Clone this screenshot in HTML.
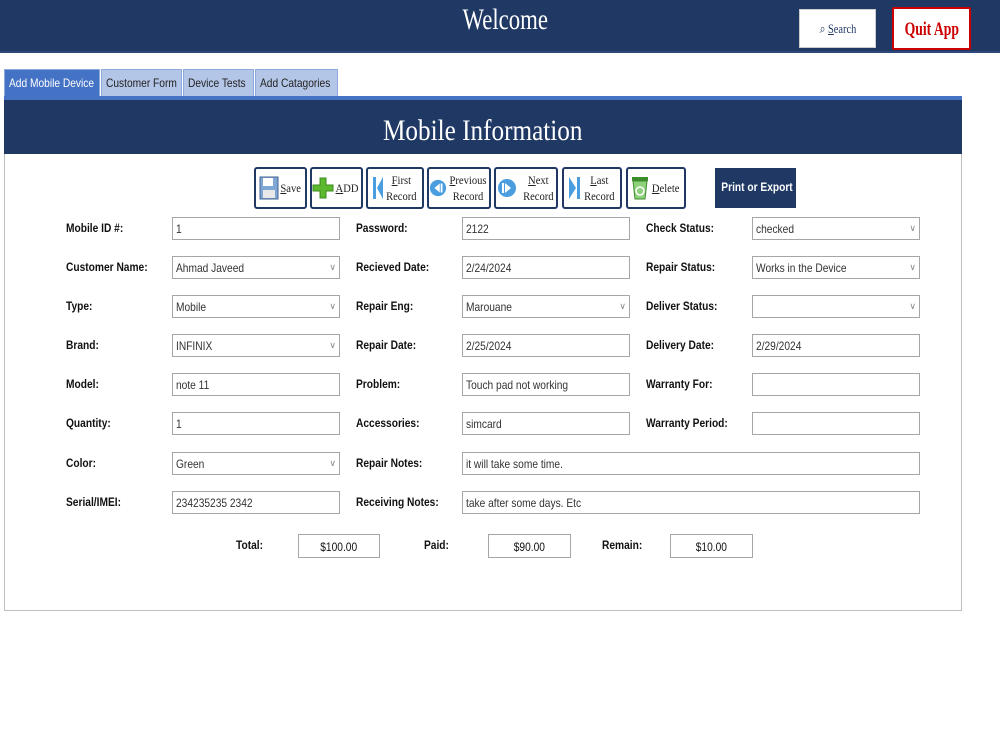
<!DOCTYPE html>
<html><head><meta charset="utf-8">
<style>
*{margin:0;padding:0;box-sizing:border-box}
body{width:1000px;height:750px;background:#fff;font-family:"Liberation Sans",sans-serif;position:relative;overflow:hidden}
.a{position:absolute}
.s{display:inline-block;transform:scaleX(.85);transform-origin:left center;white-space:nowrap}
.sc{display:inline-block;transform:scaleX(.8);white-space:nowrap}
.hdr{left:0;top:0;width:1000px;height:53px;background:#1f3864;border-bottom:2px solid #2e4a7a}
.lbl{font-size:12px;font-weight:bold;color:#111;white-space:nowrap;transform:scaleX(.85);transform-origin:left center}
.in{height:23px;border:1px solid #a6a6a6;background:#fff;font-size:12px;color:#333;padding:4px 3px;white-space:nowrap}
.arr{position:absolute;right:3px;top:5px;font-size:9px;color:#888}
.tab{top:69px;height:27px;font-size:12px;color:#222;background:#b4c6e7;border:1px solid #8ea9db;border-bottom:none;padding:6px 4px 0;white-space:nowrap;overflow:hidden}
.btn{top:167px;height:42px;border:2px solid #1f3864;border-radius:3px;background:#fff;font-family:"Liberation Serif",serif;font-size:12px;color:#222;display:flex;align-items:center;justify-content:center;text-align:center;line-height:16px;overflow:hidden}
.btn span{display:inline-block;transform:scaleX(.88)}
.tot{height:24px;border:1px solid #a6a6a6;font-size:12px;text-align:center;padding-top:5px;color:#111}
</style></head><body>
<div class="a hdr"></div>
<div class="a" style="left:0;top:3px;width:1010px;text-align:center;font-family:'Liberation Serif',serif;font-size:30px;color:#fff"><span class="sc" style="transform:scaleX(.76)">Welcome</span></div>
<div class="a" style="left:799px;top:9px;width:77px;height:39px;background:#fff;border:1px solid #ccc;font-family:'Liberation Serif',serif;font-size:13px;color:#1f3864;text-align:center;padding-top:11px"><span class="sc">&#x2315; <u>S</u>earch</span></div>
<div class="a" style="left:892px;top:7px;width:79px;height:43px;background:#fff;border:2px solid #c00;border-radius:2px;font-family:'Liberation Serif',serif;font-size:19px;font-weight:bold;color:#c00;text-align:center;padding-top:10px"><span class="sc" style="transform:scaleX(.72)">Quit App</span></div>

<div class="a tab" style="left:4px;width:96px;background:#4472c4;color:#fff"><span class="s">Add Mobile Device</span></div>
<div class="a tab" style="left:101px;width:81px"><span class="s">Customer Form</span></div>
<div class="a tab" style="left:183px;width:71px"><span class="s">Device Tests</span></div>
<div class="a tab" style="left:255px;width:83px"><span class="s">Add Catagories</span></div>

<div class="a" style="left:4px;top:96px;width:958px;height:515px;border:1px solid #bfbfbf;border-top:none"></div>
<div class="a" style="left:4px;top:96px;width:958px;height:4px;background:#4472c4"></div>
<div class="a" style="left:4px;top:100px;width:958px;height:54px;background:#1f3864;color:#fff;font-family:'Liberation Serif',serif;font-size:30px;text-align:center;padding-top:14px"><span class="sc" style="transform:scaleX(.84)">Mobile Information</span></div>

<div class="a btn" style="left:254px;width:53px"><svg width="20" height="26" viewBox="0 0 20 26"><rect x="1" y="2" width="18" height="22" fill="#7fa7d6" stroke="#46648c"/><rect x="4" y="3" width="10" height="8" fill="#fff"/><rect x="4" y="15" width="12" height="8" fill="#e8e8e8"/></svg><span><u>S</u>ave</span></div>
<div class="a btn" style="left:310px;width:53px"><svg width="22" height="24" viewBox="0 0 22 24"><path d="M8 2h6v7h7v6h-7v7H8v-7H1V9h7z" fill="#5cb82e" stroke="#3a8a1a"/></svg><span><u>A</u>DD</span></div>
<div class="a btn" style="left:366px;width:58px"><svg width="12" height="26" viewBox="0 0 12 26"><rect x="1" y="2" width="3" height="22" fill="#4a9ee0"/><path d="M11 2L5 13l6 11z" fill="#4a9ee0"/></svg><span><u>F</u>irst<br>Record</span></div>
<div class="a btn" style="left:427px;width:64px"><svg width="20" height="20" viewBox="0 0 20 20"><circle cx="10" cy="10" r="9" fill="#4a9ee0"/><path d="M12 5l-6 5 6 5z" fill="#fff"/><rect x="13" y="5" width="2" height="10" fill="#fff"/></svg><span><u>P</u>revious<br>Record</span></div>
<div class="a btn" style="left:494px;width:64px"><svg width="20" height="20" viewBox="0 0 20 20"><circle cx="10" cy="10" r="9" fill="#4a9ee0"/><path d="M8 5l6 5-6 5z" fill="#fff"/><rect x="5" y="5" width="2" height="10" fill="#fff"/></svg><span style="margin-left:4px"><u>N</u>ext<br>Record</span></div>
<div class="a btn" style="left:562px;width:60px"><svg width="14" height="26" viewBox="0 0 14 26"><path d="M1 2l7 11-7 11z" fill="#4a9ee0"/><rect x="9" y="2" width="3" height="22" fill="#4a9ee0"/></svg><span><u>L</u>ast<br>Record</span></div>
<div class="a btn" style="left:626px;width:60px"><svg width="20" height="26" viewBox="0 0 20 26"><rect x="2" y="2" width="16" height="4" fill="#3c8c2c"/><path d="M3 6h14l-2 18H5z" fill="#8fd07a" stroke="#3c8c2c"/><circle cx="10" cy="16" r="4" fill="none" stroke="#fff" stroke-width="1.5"/></svg><span><u>D</u>elete</span></div>
<div class="a" style="left:715px;top:168px;width:81px;height:40px;background:#1f3864;color:#fff;font-size:12px;font-weight:bold;text-align:center;padding-top:12px"><span class="sc" style="transform:scaleX(.85)">Print or Export</span></div>

<!-- col1 -->
<div class="a lbl" style="left:66px;top:221px">Mobile ID #:</div>
<div class="a in" style="left:172px;top:217px;width:168px"><span class="s">1</span></div>
<div class="a lbl" style="left:66px;top:260px">Customer Name:</div>
<div class="a in" style="left:172px;top:256px;width:168px"><span class="s">Ahmad Javeed</span><span class="arr">&#x2228;</span></div>
<div class="a lbl" style="left:66px;top:299px">Type:</div>
<div class="a in" style="left:172px;top:295px;width:168px"><span class="s">Mobile</span><span class="arr">&#x2228;</span></div>
<div class="a lbl" style="left:66px;top:338px">Brand:</div>
<div class="a in" style="left:172px;top:334px;width:168px"><span class="s">INFINIX</span><span class="arr">&#x2228;</span></div>
<div class="a lbl" style="left:66px;top:377px">Model:</div>
<div class="a in" style="left:172px;top:373px;width:168px"><span class="s">note 11</span></div>
<div class="a lbl" style="left:66px;top:416px">Quantity:</div>
<div class="a in" style="left:172px;top:412px;width:168px"><span class="s">1</span></div>
<div class="a lbl" style="left:66px;top:456px">Color:</div>
<div class="a in" style="left:172px;top:452px;width:168px"><span class="s">Green</span><span class="arr">&#x2228;</span></div>
<div class="a lbl" style="left:66px;top:495px">Serial/IMEI:</div>
<div class="a in" style="left:172px;top:491px;width:168px"><span class="s">234235235 2342</span></div>
<!-- col2 -->
<div class="a lbl" style="left:356px;top:221px">Password:</div>
<div class="a in" style="left:462px;top:217px;width:168px"><span class="s">2122</span></div>
<div class="a lbl" style="left:356px;top:260px">Recieved Date:</div>
<div class="a in" style="left:462px;top:256px;width:168px"><span class="s">2/24/2024</span></div>
<div class="a lbl" style="left:356px;top:299px">Repair Eng:</div>
<div class="a in" style="left:462px;top:295px;width:168px"><span class="s">Marouane</span><span class="arr">&#x2228;</span></div>
<div class="a lbl" style="left:356px;top:338px">Repair Date:</div>
<div class="a in" style="left:462px;top:334px;width:168px"><span class="s">2/25/2024</span></div>
<div class="a lbl" style="left:356px;top:377px">Problem:</div>
<div class="a in" style="left:462px;top:373px;width:168px"><span class="s">Touch pad not working</span></div>
<div class="a lbl" style="left:356px;top:416px">Accessories:</div>
<div class="a in" style="left:462px;top:412px;width:168px"><span class="s">simcard</span></div>
<div class="a lbl" style="left:356px;top:456px">Repair Notes:</div>
<div class="a in" style="left:462px;top:452px;width:458px"><span class="s">it will take some time.</span></div>
<div class="a lbl" style="left:356px;top:495px">Receiving Notes:</div>
<div class="a in" style="left:462px;top:491px;width:458px"><span class="s">take after some days. Etc</span></div>
<!-- col3 -->
<div class="a lbl" style="left:646px;top:221px">Check Status:</div>
<div class="a in" style="left:752px;top:217px;width:168px"><span class="s">checked</span><span class="arr">&#x2228;</span></div>
<div class="a lbl" style="left:646px;top:260px">Repair Status:</div>
<div class="a in" style="left:752px;top:256px;width:168px"><span class="s">Works in the Device</span><span class="arr">&#x2228;</span></div>
<div class="a lbl" style="left:646px;top:299px">Deliver Status:</div>
<div class="a in" style="left:752px;top:295px;width:168px"><span class="arr">&#x2228;</span></div>
<div class="a lbl" style="left:646px;top:338px">Delivery Date:</div>
<div class="a in" style="left:752px;top:334px;width:168px"><span class="s">2/29/2024</span></div>
<div class="a lbl" style="left:646px;top:377px">Warranty For:</div>
<div class="a in" style="left:752px;top:373px;width:168px"></div>
<div class="a lbl" style="left:646px;top:416px">Warranty Period:</div>
<div class="a in" style="left:752px;top:412px;width:168px"></div>
<!-- totals -->
<div class="a lbl" style="left:236px;top:538px">Total:</div>
<div class="a tot" style="left:298px;top:534px;width:82px"><span class="sc" style="transform:scaleX(.85)">$100.00</span></div>
<div class="a lbl" style="left:424px;top:538px">Paid:</div>
<div class="a tot" style="left:488px;top:534px;width:83px"><span class="sc" style="transform:scaleX(.85)">$90.00</span></div>
<div class="a lbl" style="left:602px;top:538px">Remain:</div>
<div class="a tot" style="left:670px;top:534px;width:83px"><span class="sc" style="transform:scaleX(.85)">$10.00</span></div>
</body></html>
